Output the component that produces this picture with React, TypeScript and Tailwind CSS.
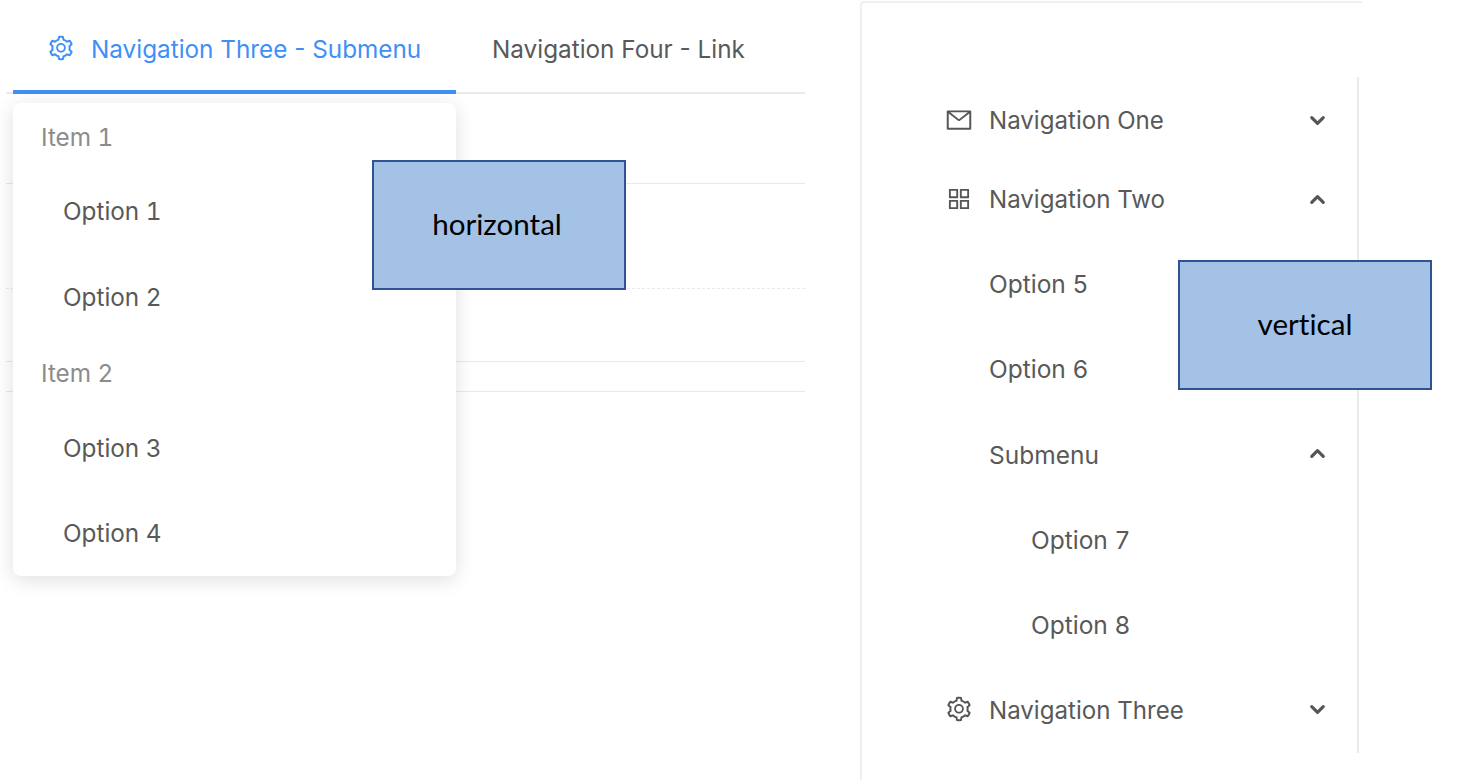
import { ChevronDown, ChevronUp } from "lucide-react";
import { AiOutlineAppstore, AiOutlineMail, AiOutlineSetting } from "react-icons/ai";

function DropItem({ label }: { label: string }) {
  return <div className="flex h-[85.5px] items-center pl-[50px] text-[#595959] tabular-nums">{label}</div>;
}

function DropGroup({ label }: { label: string }) {
  return <div className="flex h-[65.5px] items-center pl-[28px] pt-[2px] text-[#8c8c8c] tabular-nums">{label}</div>;
}

function Arrow({ up }: { up?: boolean }) {
  const cls = "ml-auto mb-[3px] h-[23px] w-[23px] text-[#555]";
  return up ? <ChevronUp className={cls} strokeWidth={3.3} /> : <ChevronDown className={cls} strokeWidth={3.3} />;
}

function SideRow({
  label,
  icon,
  arrow,
  indent = "pl-[43px]",
  tall,
}: {
  label: string;
  icon?: React.ReactNode;
  arrow?: "up" | "down";
  indent?: string;
  tall?: boolean;
}) {
  return (
    <div className={`flex items-center pr-[28px] text-[#595959] ${tall ? "h-[85.4px]" : "h-[79px]"}`}>
      {icon ? (
        <span className="-ml-[1.5px] mb-[4px] flex w-[44.5px] shrink-0 items-center text-[#555]">{icon}</span>
      ) : (
        <span className={indent} />
      )}
      <span className={icon ? "" : "text-[24.5px] tabular-nums"}>{label}</span>
      {arrow && <Arrow up={arrow === "up"} />}
    </div>
  );
}

export default function App() {
  return (
    <div className="flex h-[780px] w-[1458px] overflow-hidden bg-white font-['Inter',sans-serif] text-[24.1px]">
      {/* horizontal menu */}
      <section className="relative w-[860px] shrink-0 pl-[6px] text-[24.3px]">
        <div className="relative w-[799px]">
          <nav className="flex h-[94px] border-b-2 border-[#e9e9ee]">
            <div className="ml-[7px] flex h-[94px] w-[443px] items-center gap-[16px] border-b-[4px] border-[#3f8ff7] pl-[34px] pt-[9px] text-[#3f8ff7]">
              <AiOutlineSetting className="mb-[4px] h-[28px] w-[28px]" />
              <span>Navigation Three - Submenu</span>
            </div>
            <div className="flex items-center pl-[36px] pt-[7px] text-[#595959]">Navigation Four - Link</div>
          </nav>
          <div className="h-[90px] border-b border-[#e8e8ee]" />
          <div className="h-[105px] border-b border-dashed border-[#e8e8ee]" />
          <div className="h-[73px] border-b border-[#e8e8ee]" />
          <div className="h-[30px] border-b border-[#e8e8ee]" />

          <div className="absolute left-[7px] top-[103px] w-[443px] rounded-[8px] bg-white shadow-[0_4px_20px_rgba(0,0,0,0.13)]">
            <DropGroup label="Item 1" />
            <DropItem label="Option 1" />
            <DropItem label="Option 2" />
            <DropGroup label="Item 2" />
            <DropItem label="Option 3" />
            <DropItem label="Option 4" />
          </div>
        </div>

        <div className="absolute left-[372px] top-[160px] flex h-[130px] w-[254px] items-center justify-center border-2 border-[#2f5291] bg-[#a4c2e5] pb-[2px] pr-[4px] font-['Lato',sans-serif] text-[29.6px] text-black [font-variant-ligatures:none]">
          horizontal
        </div>
      </section>

      {/* vertical menu */}
      <section className="relative mt-[1px] w-[502px] shrink-0 rounded-tl-[4px] border-l-2 border-t-2 border-[#efeff3]">
        <div className="mt-[74px] h-[676px] w-[497px] border-r-2 border-[#e9e9ee] pl-[84px] pt-[5px]">
          <SideRow label="Navigation One" arrow="down" icon={<AiOutlineMail className="h-[28px] w-[28px]" />} />
          <SideRow label="Navigation Two" arrow="up" icon={<AiOutlineAppstore className="h-[28px] w-[28px]" />} />
          <div className="pt-[1.6px]">
            <SideRow label="Option 5" tall />
            <SideRow label="Option 6" tall />
            <SideRow label="Submenu" arrow="up" tall />
            <SideRow label="Option 7" indent="pl-[85px]" tall />
            <SideRow label="Option 8" indent="pl-[85px]" tall />
            <SideRow label="Navigation Three" arrow="down" icon={<AiOutlineSetting className="h-[28px] w-[28px]" />} tall />
          </div>
        </div>
        <div className="absolute left-[316px] top-[257px] flex h-[130px] w-[254px] items-center justify-center border-2 border-[#2f5291] bg-[#a4c2e5] pb-[2px] font-['Lato',sans-serif] text-[29.6px] text-black [font-variant-ligatures:none]">
          vertical
        </div>
      </section>
    </div>
  );
}
